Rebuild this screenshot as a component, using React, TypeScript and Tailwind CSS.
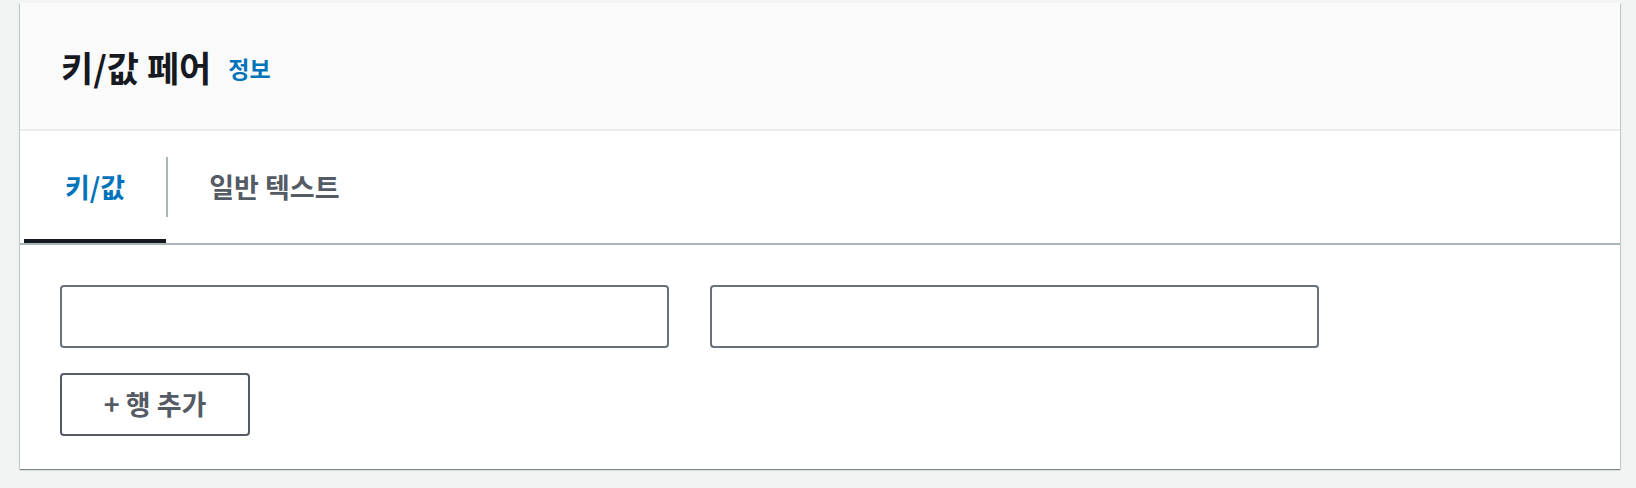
import { useState } from "react";

const font = {
  fontFamily: '"Noto Sans CJK KR", "Noto Sans", "Liberation Sans", sans-serif',
};

function Tab({
  label,
  active,
  onClick,
  divider,
}: {
  label: string;
  active: boolean;
  onClick: () => void;
  divider?: boolean;
}) {
  return (
    <div className="flex items-stretch">
      <button
        onClick={onClick}
        className={
          "relative h-full px-[41px] text-[27px] font-bold " +
          (active ? "text-[#0073bb]" : "text-[#545b64]")
        }
      >
        {label}
        {active && (
          <span className="absolute left-0 right-0 bottom-0 h-[4px] bg-[#16191f]" />
        )}
      </button>
      {divider && <div className="my-[26px] w-[2px] bg-[#aab7b8]" />}
    </div>
  );
}

export default function App() {
  const [tab, setTab] = useState("kv");
  const [rows, setRows] = useState([{ key: "", value: "" }]);

  return (
    <div
      className="min-h-[488px] bg-[#f2f3f3] pt-[3px] pl-[20px] pr-[16px]"
      style={font}
    >
      <div className="w-[1600px] h-[466px] bg-white shadow-[0_1px_1px_0_rgba(0,28,36,0.3),1px_1px_1px_0_rgba(0,28,36,0.15),-1px_1px_1px_0_rgba(0,28,36,0.15)] flex flex-col">
        <div className="h-[128px] bg-[#fafafa] border-b-2 border-[#eaeded] flex items-center pl-[41px] pr-[40px]">
          <h2 className="text-[35px] font-bold text-[#16191f] leading-none">
            키/값 페어
          </h2>
          <a className="ml-[17px] mt-[4px] text-[23px] font-bold text-[#0073bb] leading-none">
            정보
          </a>
        </div>

        <div className="h-[114px] px-[4px] flex border-b-2 border-[#aab7b8]">
          <Tab
            label="키/값"
            active={tab === "kv"}
            onClick={() => setTab("kv")}
            divider
          />
          <Tab
            label="일반 텍스트"
            active={tab === "text"}
            onClick={() => setTab("text")}
          />
        </div>

        <div className="px-[40px] pt-[40px] flex flex-col gap-[25px]">
          {rows.map((row, i) => (
            <div key={i} className="flex gap-[41px]">
              <input
                value={row.key}
                onChange={(e) =>
                  setRows(
                    rows.map((r, j) =>
                      j === i ? { ...r, key: e.target.value } : r
                    )
                  )
                }
                className="w-[609px] h-[63px] rounded-[4px] border-2 border-[#687078] px-[16px] text-[24px] outline-none"
              />
              <input
                value={row.value}
                onChange={(e) =>
                  setRows(
                    rows.map((r, j) =>
                      j === i ? { ...r, value: e.target.value } : r
                    )
                  )
                }
                className="w-[609px] h-[63px] rounded-[4px] border-2 border-[#687078] px-[16px] text-[24px] outline-none"
              />
            </div>
          ))}
          <button
            onClick={() => setRows([...rows, { key: "", value: "" }])}
            className="w-[190px] h-[63px] rounded-[4px] border-2 border-[#545b64] text-[27px] font-bold text-[#545b64] bg-white"
          >
            + 행 추가
          </button>
        </div>
      </div>
    </div>
  );
}
